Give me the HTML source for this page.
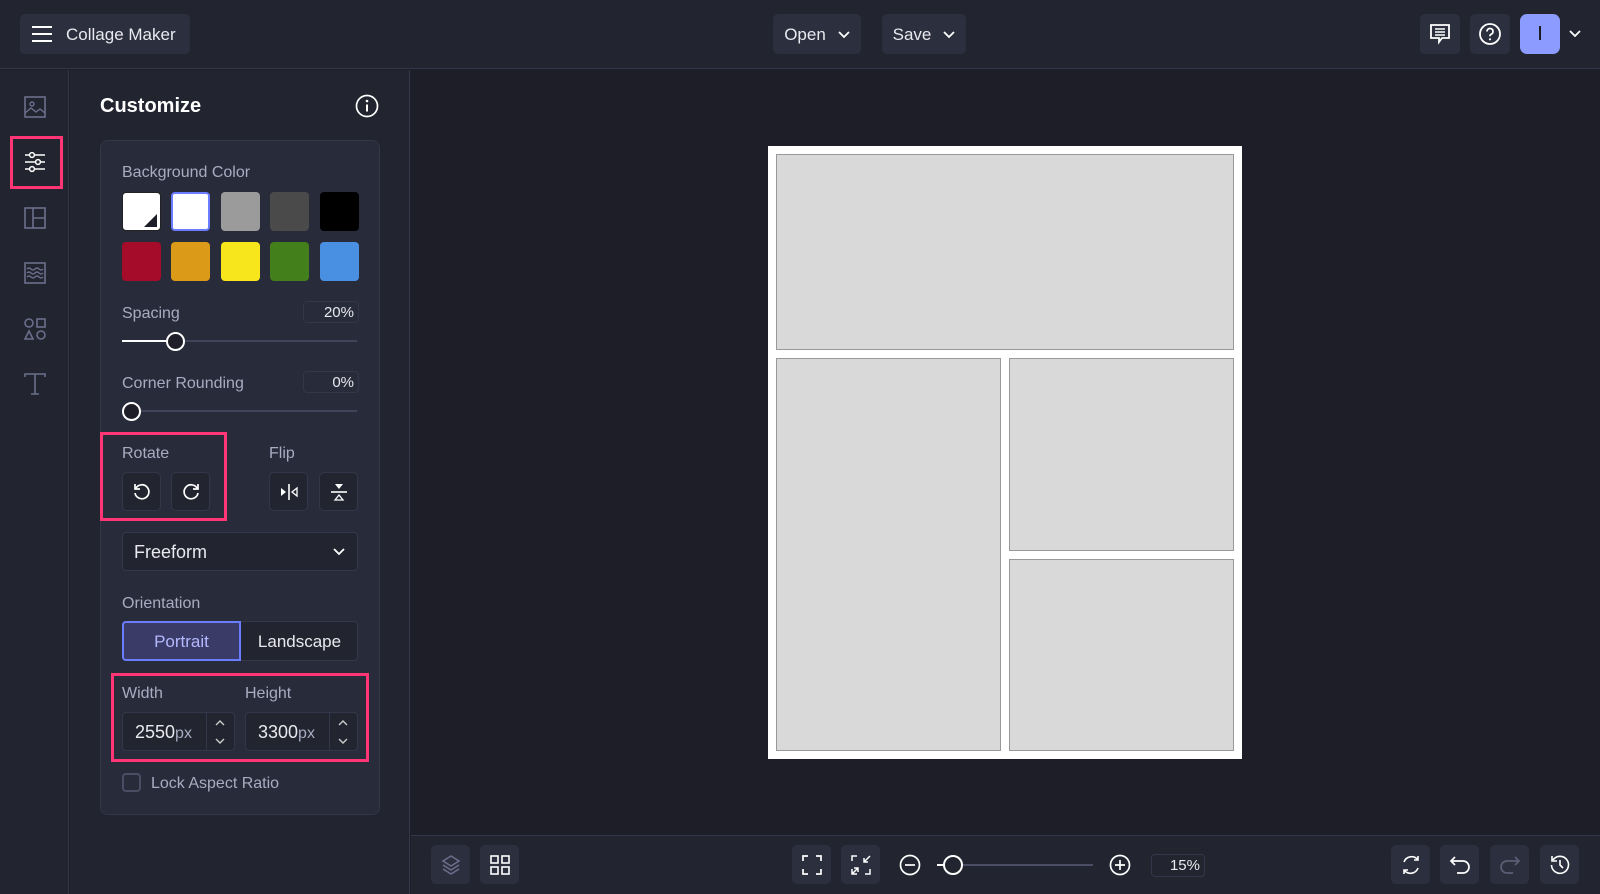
<!DOCTYPE html>
<html><head><meta charset="utf-8"><style>
*{box-sizing:border-box;margin:0;padding:0}
body{width:1600px;height:894px;background:#1d1e27;font-family:"Liberation Sans",sans-serif;position:relative;overflow:hidden;color:#e9e9ef}
.a{position:absolute}
.btn{position:absolute;background:#2c2f3e;border-radius:5px;display:flex;align-items:center;justify-content:center}
.lbl{position:absolute;color:#a9acc0;font-size:16px}
.sw{position:absolute;width:39px;height:39px;border-radius:4px}
svg{display:block}
</style></head><body>
<!-- top bar -->
<div class="a" style="left:0;top:0;width:1600px;height:69px;background:#22242f;border-bottom:1px solid #34374a"></div>
<div class="btn" style="left:20px;top:14px;width:170px;height:40px;justify-content:flex-start">
 <svg width="22" height="18" style="margin-left:11px" viewBox="0 0 22 18"><path d="M1 2h20M1 9h20M1 16h20" stroke="#fff" stroke-width="2"/></svg>
 <span style="margin-left:13px;font-size:17px;padding-top:2px">Collage Maker</span></div>
<div class="btn" style="left:773px;top:14px;width:88px;height:40px;font-size:17px;padding-top:2px">Open <svg width="12" height="8" style="margin-left:12px" viewBox="0 0 12 8"><path d="M1 1l5 5 5-5" stroke="#fff" stroke-width="1.8" fill="none"/></svg></div>
<div class="btn" style="left:882px;top:14px;width:84px;height:40px;font-size:17px;padding-top:2px">Save <svg width="12" height="8" style="margin-left:12px" viewBox="0 0 12 8"><path d="M1 1l5 5 5-5" stroke="#fff" stroke-width="1.8" fill="none"/></svg></div>
<div class="btn" style="left:1420px;top:14px;width:40px;height:40px"><svg width="22" height="22" viewBox="0 0 22 22"><path d="M2 2h18v13h-7l-3 4v-4H2z" fill="none" stroke="#fff" stroke-width="1.8"/><path d="M6 6h10M6 9h10M6 12h10" stroke="#fff" stroke-width="1.5"/></svg></div>
<div class="btn" style="left:1470px;top:14px;width:40px;height:40px"><svg width="24" height="24" viewBox="0 0 24 24"><circle cx="12" cy="12" r="10" fill="none" stroke="#fff" stroke-width="1.8"/><path d="M9 9.5a3 3 0 1 1 4 2.8c-.8.4-1 1-1 2" fill="none" stroke="#fff" stroke-width="1.8"/><circle cx="12" cy="17.3" r="1.1" fill="#fff"/></svg></div>
<div class="a" style="left:1520px;top:14px;width:40px;height:40px;background:#8b9bff;border-radius:7px;color:#111;font-size:20px;text-align:center;line-height:41px">I</div>
<svg class="a" style="left:1569px;top:30px" width="12" height="8" viewBox="0 0 12 8"><path d="M1 1l5 5 5-5" stroke="#fff" stroke-width="1.8" fill="none"/></svg>
<!-- left rail -->
<div class="a" style="left:0;top:70px;width:69px;height:824px;background:#22242f;border-right:1px solid #34374a"></div>
<svg class="a" style="left:24px;top:96px" width="22" height="22" viewBox="0 0 22 22"><rect x="1" y="1" width="20" height="20" fill="none" stroke="#6b6f8c" stroke-width="1.6"/><circle cx="8" cy="8" r="2" fill="none" stroke="#6b6f8c" stroke-width="1.4"/><path d="M1 17l6-5 5 4 4-3 5 4" fill="none" stroke="#6b6f8c" stroke-width="1.4"/></svg>
<div class="a" style="left:10px;top:136px;width:53px;height:53px;border:3px solid #ff3576"></div>
<svg class="a" style="left:24px;top:151px" width="22" height="22" viewBox="0 0 22 22"><path d="M1 4h20M1 11h20M1 18h20" stroke="#fff" stroke-width="1.6"/><circle cx="8" cy="4" r="2.4" fill="#22242f" stroke="#fff" stroke-width="1.5"/><circle cx="14" cy="11" r="2.4" fill="#22242f" stroke="#fff" stroke-width="1.5"/><circle cx="8" cy="18" r="2.4" fill="#22242f" stroke="#fff" stroke-width="1.5"/></svg>
<svg class="a" style="left:24px;top:207px" width="22" height="22" viewBox="0 0 22 22"><rect x="1" y="1" width="20" height="20" fill="none" stroke="#6b6f8c" stroke-width="1.6"/><path d="M9 1v20M9 11h12" stroke="#6b6f8c" stroke-width="1.6"/></svg>
<svg class="a" style="left:24px;top:262px" width="22" height="22" viewBox="0 0 22 22"><rect x="1" y="1" width="20" height="20" fill="none" stroke="#6b6f8c" stroke-width="1.6"/><path d="M3 7q2-2 4 0t4 0 4 0 4 0M3 11q2-2 4 0t4 0 4 0 4 0M3 15q2-2 4 0t4 0 4 0 4 0" fill="none" stroke="#6b6f8c" stroke-width="1.3"/></svg>
<svg class="a" style="left:23px;top:317px" width="24" height="24" viewBox="0 0 24 24"><circle cx="6" cy="6" r="4" fill="none" stroke="#6b6f8c" stroke-width="1.6"/><rect x="14" y="2" width="8" height="8" fill="none" stroke="#6b6f8c" stroke-width="1.6"/><path d="M6 14l4 8H2z" fill="none" stroke="#6b6f8c" stroke-width="1.6"/><circle cx="18" cy="18" r="4" fill="none" stroke="#6b6f8c" stroke-width="1.6"/></svg>
<svg class="a" style="left:24px;top:372px" width="22" height="24" viewBox="0 0 22 24"><path d="M1 5V2h20v3M11 2v20M7 22h8" fill="none" stroke="#6b6f8c" stroke-width="1.6"/></svg>
<!-- panel -->
<div class="a" style="left:70px;top:70px;width:340px;height:824px;background:#22242f;border-right:1px solid #34374a"></div>
<div class="a" style="left:100px;top:95px;font-size:20px;font-weight:bold;color:#fff">Customize</div>
<svg class="a" style="left:355px;top:94px" width="24" height="24" viewBox="0 0 24 24"><circle cx="12" cy="12" r="10.5" fill="none" stroke="#fff" stroke-width="1.7"/><circle cx="12" cy="7" r="1.3" fill="#fff"/><path d="M12 10.5v7" stroke="#fff" stroke-width="2"/></svg>
<div class="a" style="left:100px;top:140px;width:280px;height:675px;background:#282b3a;border:1px solid #34374a;border-radius:8px"></div>
<div class="lbl" style="left:122px;top:164px">Background Color</div>
<div class="sw" style="left:122px;top:192px;background:#fff;border:1px solid #222"><svg class="a" style="right:3px;bottom:3px" width="13" height="13"><path d="M13 0V13H0z" fill="#1d1e27"/></svg></div>
<div class="sw" style="left:171px;top:192px;background:#fff;border:2px solid #6a7dff"></div>
<div class="sw" style="left:221px;top:192px;background:#9b9b9b"></div>
<div class="sw" style="left:270px;top:192px;background:#4a4a4a"></div>
<div class="sw" style="left:320px;top:192px;background:#000"></div>
<div class="sw" style="left:122px;top:242px;background:#a50c2a"></div>
<div class="sw" style="left:171px;top:242px;background:#db9b18"></div>
<div class="sw" style="left:221px;top:242px;background:#f8e61c"></div>
<div class="sw" style="left:270px;top:242px;background:#437f1a"></div>
<div class="sw" style="left:320px;top:242px;background:#4a90e2"></div>
<div class="lbl" style="left:122px;top:305px">Spacing</div>
<div class="a" style="left:303px;top:301px;width:56px;height:22px;border:1px solid #34374a;border-radius:4px;text-align:right;padding-right:4px;font-size:15px;line-height:22px">20%</div>
<div class="a" style="left:122px;top:340px;width:235px;height:2px;background:#41445a"></div>
<div class="a" style="left:122px;top:340px;width:54px;height:2px;background:#fff"></div>
<div class="a" style="left:166px;top:332px;width:19px;height:19px;border-radius:50%;border:2px solid #fff;background:#1d1e27"></div>
<div class="lbl" style="left:122px;top:375px">Corner Rounding</div>
<div class="a" style="left:303px;top:371px;width:56px;height:22px;border:1px solid #34374a;border-radius:4px;text-align:right;padding-right:4px;font-size:15px;line-height:22px">0%</div>
<div class="a" style="left:122px;top:410px;width:235px;height:2px;background:#41445a"></div>
<div class="a" style="left:122px;top:402px;width:19px;height:19px;border-radius:50%;border:2px solid #fff;background:#1d1e27"></div>
<div class="a" style="left:100px;top:432px;width:127px;height:89px;border:3px solid #ff3576"></div>
<div class="lbl" style="left:122px;top:445px">Rotate</div>
<div class="lbl" style="left:269px;top:445px">Flip</div>
<div class="btn" style="left:122px;top:472px;width:39px;height:39px;background:#22242f;border:1px solid #34374a"><svg width="20" height="20" viewBox="0 0 20 20"><path d="M4 6A7 7 0 1 1 3 11" fill="none" stroke="#fff" stroke-width="1.7"/><path d="M3 2v5h5" fill="none" stroke="#fff" stroke-width="1.7"/></svg></div>
<div class="btn" style="left:171px;top:472px;width:39px;height:39px;background:#22242f;border:1px solid #34374a"><svg width="20" height="20" viewBox="0 0 20 20"><path d="M16 6A7 7 0 1 0 17 11" fill="none" stroke="#fff" stroke-width="1.7"/><path d="M17 2v5h-5" fill="none" stroke="#fff" stroke-width="1.7"/></svg></div>
<div class="btn" style="left:269px;top:472px;width:39px;height:39px;background:#22242f;border:1px solid #34374a"><svg width="20" height="20" viewBox="0 0 20 20"><path d="M10 2v16" stroke="#fff" stroke-width="1.6"/><path d="M2 6l5 4-5 4z" fill="#fff"/><path d="M18 6l-5 4 5 4z" fill="none" stroke="#fff" stroke-width="1.3"/></svg></div>
<div class="btn" style="left:319px;top:472px;width:39px;height:39px;background:#22242f;border:1px solid #34374a"><svg width="20" height="20" viewBox="0 0 20 20"><path d="M2 10h16" stroke="#fff" stroke-width="1.6"/><path d="M6 2l4 5 4-5z" fill="#fff"/><path d="M6 18l4-5 4 5z" fill="none" stroke="#fff" stroke-width="1.3"/></svg></div>
<div class="a" style="left:122px;top:532px;width:236px;height:39px;background:#22242f;border:1px solid #34374a;border-radius:4px;font-size:18px;padding-left:11px;line-height:39px">Freeform<svg class="a" style="right:12px;top:15px" width="12" height="8" viewBox="0 0 12 8"><path d="M1 1l5 5 5-5" stroke="#fff" stroke-width="1.8" fill="none"/></svg></div>
<div class="lbl" style="left:122px;top:595px">Orientation</div>
<div class="a" style="left:122px;top:621px;width:236px;height:40px;background:#22242f;border:1px solid #34374a;border-radius:4px"></div>
<div class="a" style="left:122px;top:621px;width:119px;height:40px;background:#3a3b66;border:2px solid #6a7dff;border-radius:4px 0 0 4px;color:#b4b9ff;font-size:17px;text-align:center;line-height:38px">Portrait</div>
<div class="a" style="left:241px;top:621px;width:117px;height:40px;font-size:17px;text-align:center;line-height:42px">Landscape</div>
<div class="a" style="left:111px;top:673px;width:258px;height:89px;border:3px solid #ff3576"></div>
<div class="lbl" style="left:122px;top:685px">Width</div>
<div class="lbl" style="left:245px;top:685px">Height</div>
<div class="a" style="left:122px;top:712px;width:113px;height:39px;background:#22242f;border:1px solid #34374a;border-radius:4px;font-size:18px;line-height:39px;padding-left:12px">2550<span style="color:#a9acc0;font-size:16px">px</span><div class="a" style="left:83px;top:0;width:1px;height:37px;background:#34374a"></div><svg class="a" style="left:92px;top:6px" width="10" height="26" viewBox="0 0 10 26"><path d="M1 6l4-4 4 4M1 20l4 4 4-4" fill="none" stroke="#ccc" stroke-width="1.4"/></svg></div>
<div class="a" style="left:245px;top:712px;width:113px;height:39px;background:#22242f;border:1px solid #34374a;border-radius:4px;font-size:18px;line-height:39px;padding-left:12px">3300<span style="color:#a9acc0;font-size:16px">px</span><div class="a" style="left:83px;top:0;width:1px;height:37px;background:#34374a"></div><svg class="a" style="left:92px;top:6px" width="10" height="26" viewBox="0 0 10 26"><path d="M1 6l4-4 4 4M1 20l4 4 4-4" fill="none" stroke="#ccc" stroke-width="1.4"/></svg></div>
<div class="a" style="left:122px;top:773px;width:19px;height:19px;border:2px solid #4a4d63;border-radius:4px"></div>
<div class="lbl" style="left:151px;top:775px">Lock Aspect Ratio</div>
<!-- canvas -->
<div class="a" style="left:768px;top:146px;width:474px;height:613px;background:#fff"></div>
<div class="a" style="left:776px;top:154px;width:458px;height:196px;background:#d9d9d9;border:1px solid #999"></div>
<div class="a" style="left:776px;top:358px;width:225px;height:393px;background:#d9d9d9;border:1px solid #999"></div>
<div class="a" style="left:1009px;top:358px;width:225px;height:193px;background:#d9d9d9;border:1px solid #999"></div>
<div class="a" style="left:1009px;top:559px;width:225px;height:192px;background:#d9d9d9;border:1px solid #999"></div>
<!-- bottom bar -->
<div class="a" style="left:411px;top:835px;width:1189px;height:59px;background:#22242f;border-top:1px solid #34374a"></div>
<div class="btn" style="left:431px;top:845px;width:39px;height:39px"><svg width="22" height="22" viewBox="0 0 22 22"><path d="M11 2l8 5-8 5-8-5zM3 11l8 5 8-5M3 15l8 5 8-5" fill="none" stroke="#6b6f8c" stroke-width="1.5"/></svg></div>
<div class="btn" style="left:480px;top:845px;width:39px;height:39px"><svg width="20" height="20" viewBox="0 0 20 20"><rect x="1" y="1" width="7" height="7" fill="none" stroke="#fff" stroke-width="1.6"/><rect x="12" y="1" width="7" height="7" fill="none" stroke="#fff" stroke-width="1.6"/><rect x="1" y="12" width="7" height="7" fill="none" stroke="#fff" stroke-width="1.6"/><rect x="12" y="12" width="7" height="7" fill="none" stroke="#fff" stroke-width="1.6"/></svg></div>
<div class="btn" style="left:792px;top:845px;width:39px;height:39px"><svg width="20" height="20" viewBox="0 0 20 20"><path d="M1 6V1h5M14 1h5v5M19 14v5h-5M6 19H1v-5" fill="none" stroke="#fff" stroke-width="1.7"/></svg></div>
<div class="btn" style="left:841px;top:845px;width:39px;height:39px"><svg width="20" height="20" viewBox="0 0 20 20"><path d="M1 6V1h5M19 14v5h-5M6 19H1v-5M19 1l-6 6M13 3v4h4M1 19l6-6M3 13h4v4" fill="none" stroke="#fff" stroke-width="1.5"/></svg></div>
<svg class="a" style="left:899px;top:854px" width="22" height="22" viewBox="0 0 22 22"><circle cx="11" cy="11" r="9.5" fill="none" stroke="#fff" stroke-width="1.7"/><path d="M6 11h10" stroke="#fff" stroke-width="1.7"/></svg>
<div class="a" style="left:952px;top:864px;width:141px;height:2px;background:#4a4d63"></div>
<div class="a" style="left:937px;top:864px;width:15px;height:2px;background:#fff"></div>
<div class="a" style="left:943px;top:855px;width:20px;height:20px;border-radius:50%;border:2px solid #fff;background:#22242f"></div>
<svg class="a" style="left:1109px;top:854px" width="22" height="22" viewBox="0 0 22 22"><circle cx="11" cy="11" r="9.5" fill="none" stroke="#fff" stroke-width="1.7"/><path d="M6 11h10M11 6v10" stroke="#fff" stroke-width="1.7"/></svg>
<div class="a" style="left:1151px;top:854px;width:54px;height:23px;border:1px solid #34374a;border-radius:4px;font-size:15px;text-align:right;padding-right:4px;line-height:22px">15%</div>
<div class="btn" style="left:1391px;top:845px;width:39px;height:39px"><svg width="22" height="22" viewBox="0 0 22 22"><path d="M4 8a8 8 0 0 1 14-2M18 14a8 8 0 0 1-14 2" fill="none" stroke="#fff" stroke-width="1.6"/><path d="M18 2v4h-4M4 20v-4h4" fill="none" stroke="#fff" stroke-width="1.6"/></svg></div>
<div class="btn" style="left:1440px;top:845px;width:39px;height:39px"><svg width="22" height="20" viewBox="0 0 22 20"><path d="M6 2L2 6l4 4M2 6h12a6 6 0 0 1 0 12H8" fill="none" stroke="#fff" stroke-width="1.7"/></svg></div>
<div class="btn" style="left:1490px;top:845px;width:39px;height:39px"><svg width="22" height="20" viewBox="0 0 22 20"><path d="M16 2l4 4-4 4M20 6H8a6 6 0 0 0 0 12h6" fill="none" stroke="#5b5e74" stroke-width="1.7"/></svg></div>
<div class="btn" style="left:1540px;top:845px;width:39px;height:39px"><svg width="22" height="22" viewBox="0 0 22 22"><path d="M4 6a8.5 8.5 0 1 1-1.5 5" fill="none" stroke="#fff" stroke-width="1.6"/><path d="M3 2v5h5M11 6v5l3 3" fill="none" stroke="#fff" stroke-width="1.6"/></svg></div>
</body></html>
